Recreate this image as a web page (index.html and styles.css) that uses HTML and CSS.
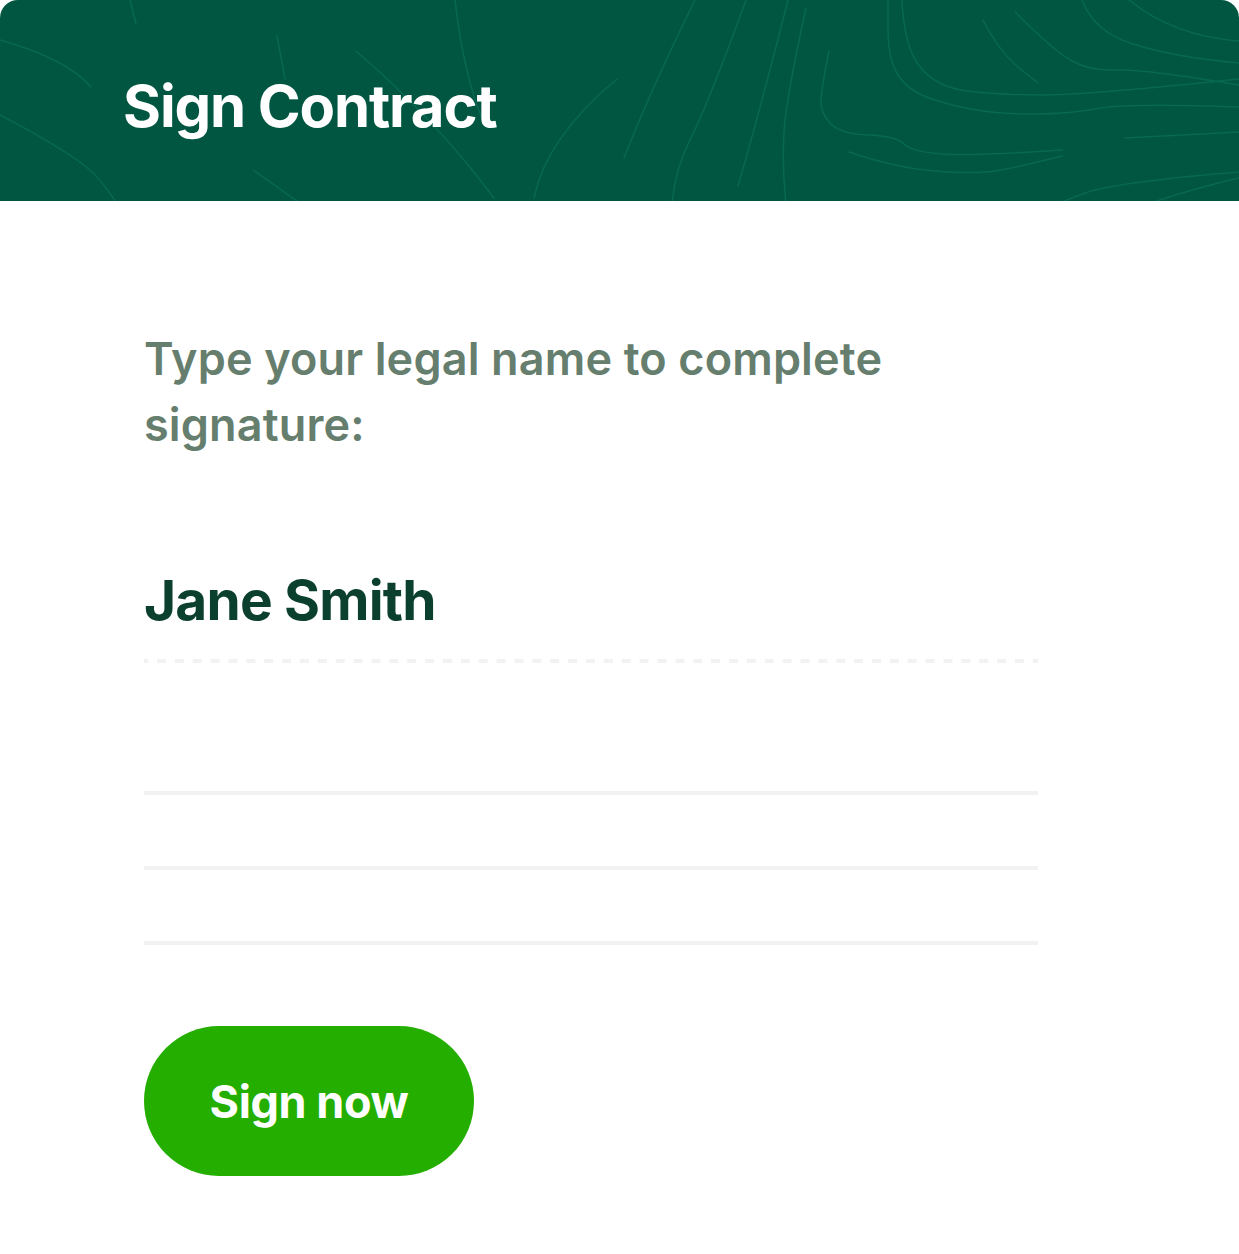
FILE: index.html
```html
<!DOCTYPE html>
<html>
<head>
	<meta charset="utf-8">
	<title>Sign Contract</title>
	<link rel="stylesheet" href="styles.css">
</head>
<body>
	<div class="card">
		<div class="top">
			<svg class="lines" viewBox="0 0 1239 201" aria-hidden="true">
				<path d="M829 51Q821 91 821 102Q821 114 831 124Q841 134 868 135Q896 136 904 144Q912 152 943 154Q975 156 1062 150"/>
				<path d="M849 152Q896 168 935 171Q975 174 995 171Q1015 168 1062 156"/>
				<path d="M888 0L888 30Q888 59 898 75Q908 91 932 99Q956 107 977 110Q999 114 1034 114Q1070 114 1101 108Q1133 103 1239 107"/>
				<path d="M902 0Q904 47 920 67Q936 87 967 91Q999 95 1042 95Q1086 95 1239 79"/>
				<path d="M983 20Q999 51 1018 67L1038 83"/>
				<path d="M1015 12Q1054 51 1072 61Q1090 71 1117 70Q1145 69 1239 85"/>
				<path d="M1082 0Q1094 32 1133 44Q1173 57 1239 63"/>
				<path d="M1129 0Q1173 36 1239 41"/>
				<path d="M1239 132L1125 138"/>
				<path d="M1239 172Q1117 182 1085 193L1054 205"/>
				<path d="M1239 178Q1173 193 1082 227"/>
				<path d="M746 0Q707 107 689 142Q671 178 671 225"/>
				<path d="M695 0Q652 87 624 158"/>
				<path d="M788 0Q758 118 738 186"/>
				<path d="M806 8Q786 99 784 132Q782 166 786 205"/>
				<path d="M130 0L136 24"/>
				<path d="M0 40Q67 59 91 87"/>
				<path d="M0 115Q59 146 85 166Q111 186 134 237"/>
				<path d="M277 36L285 79"/>
				<path d="M455 0Q463 71 482 119"/>
				<path d="M617 79Q546 138 534 198"/>
				<path d="M253 170L348 237"/>
				<path d="M356 51Q435 119 494 198"/>
			</svg>
			<h1>Sign Contract</h1>
		</div>
		<div class="main">
			<p class="hint">Type your legal name to complete signature:</p>
			<div class="name">Jane Smith</div>
			<div class="dash"></div>
			<div class="rules">
				<div class="rule"></div>
				<div class="rule"></div>
				<div class="rule"></div>
			</div>
			<a class="btn" href="#">Sign now</a>
		</div>
	</div>
</body>
</html>
```

FILE: styles.css
```css
*{
	margin: 0;
	padding: 0;
	box-sizing: border-box;
}
body{
	background: #fff;
	font-family: "Inter", "Liberation Sans", sans-serif;
}
.card{
	background: #fff;
}
.top{
	position: relative;
	display: flex;
	align-items: center;
	height: 201px;
	padding-left: 123px;
	padding-top: 10px;
	background: #015642;
	border-radius: 18px 18px 0 0;
	overflow: hidden;
}
.lines{
	position: absolute;
	left: 0;
	top: 0;
	width: 100%;
	height: 100%;
}
.lines path{
	fill: none;
	stroke: #086852;
	stroke-width: 1.5;
	stroke-linecap: round;
}
.top h1{
	position: relative;
	font-size: 58px;
	font-weight: 700;
	letter-spacing: -1.1px;
	line-height: 72px;
	color: #fff;
}
.main{
	padding: 125px 201px 0 144px;
}
.hint{
	width: 780px;
	font-size: 45px;
	font-weight: 600;
	letter-spacing: 0.15px;
	line-height: 66px;
	color: #667e6d;
}
.name{
	margin-top: 107px;
	padding-bottom: 24px;
	font-size: 55px;
	font-weight: 700;
	letter-spacing: -0.8px;
	line-height: 70px;
	color: #0b3f2e;
}
.dash{
	height: 4px;
	background: linear-gradient(90deg, #f2f2f2 9px, transparent 9px) -4.88px 0 / 17.88px 4px repeat-x;
}
.rules{
	display: flex;
	flex-direction: column;
	gap: 71px;
	margin-top: 128px;
}
.rule{
	height: 4px;
	background: #f2f2f2;
}
.btn{
	display: flex;
	align-items: center;
	justify-content: center;
	width: 330px;
	height: 150px;
	margin-top: 81px;
	border-radius: 75px;
	background: #24ae00;
	font-size: 45px;
	font-weight: 700;
	letter-spacing: -0.4px;
	color: #fff;
	text-decoration: none;
}
```
